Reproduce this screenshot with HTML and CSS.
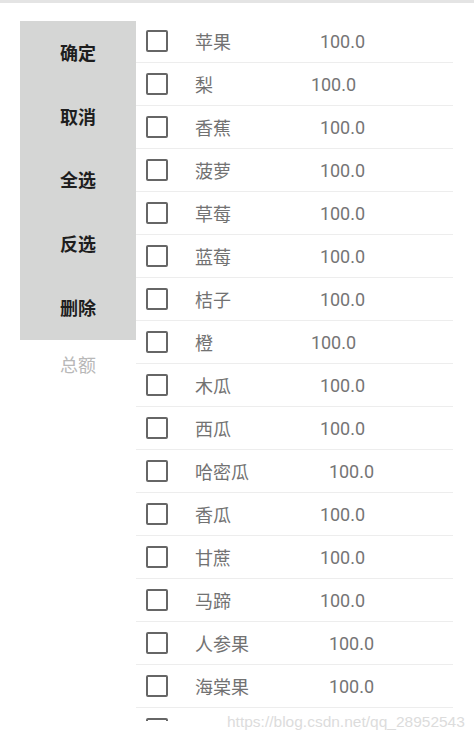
FILE: index.html
```html
<!DOCTYPE html>
<html lang="zh">
<head>
<meta charset="utf-8">
<link rel="stylesheet" href="styles.css">
</head>
<body>
<div class="topbar"></div>
<div class="main">
  <div class="side">
    <div class="panel">
      <div class="btn">确定</div>
      <div class="btn">取消</div>
      <div class="btn">全选</div>
      <div class="btn">反选</div>
      <div class="btn">删除</div>
    </div>
    <div class="total">总额</div>
  </div>
  <div class="list">
    <div class="row"><span class="cb"></span><span class="name">苹果</span><span class="num"><span>100.0</span></span></div>
    <div class="row"><span class="cb"></span><span class="name">梨</span><span class="num"><span>100.0</span></span></div>
    <div class="row"><span class="cb"></span><span class="name">香蕉</span><span class="num"><span>100.0</span></span></div>
    <div class="row"><span class="cb"></span><span class="name">菠萝</span><span class="num"><span>100.0</span></span></div>
    <div class="row"><span class="cb"></span><span class="name">草莓</span><span class="num"><span>100.0</span></span></div>
    <div class="row"><span class="cb"></span><span class="name">蓝莓</span><span class="num"><span>100.0</span></span></div>
    <div class="row"><span class="cb"></span><span class="name">桔子</span><span class="num"><span>100.0</span></span></div>
    <div class="row"><span class="cb"></span><span class="name">橙</span><span class="num"><span>100.0</span></span></div>
    <div class="row"><span class="cb"></span><span class="name">木瓜</span><span class="num"><span>100.0</span></span></div>
    <div class="row"><span class="cb"></span><span class="name">西瓜</span><span class="num"><span>100.0</span></span></div>
    <div class="row"><span class="cb"></span><span class="name">哈密瓜</span><span class="num"><span>100.0</span></span></div>
    <div class="row"><span class="cb"></span><span class="name">香瓜</span><span class="num"><span>100.0</span></span></div>
    <div class="row"><span class="cb"></span><span class="name">甘蔗</span><span class="num"><span>100.0</span></span></div>
    <div class="row"><span class="cb"></span><span class="name">马蹄</span><span class="num"><span>100.0</span></span></div>
    <div class="row"><span class="cb"></span><span class="name">人参果</span><span class="num"><span>100.0</span></span></div>
    <div class="row"><span class="cb"></span><span class="name">海棠果</span><span class="num"><span>100.0</span></span></div>
    <div class="row"><span class="cb"></span></div>
  </div>
</div>
<div class="watermark">https://blog.csdn.net/qq_28952543</div>
</body>
</html>
```
FILE: styles.css
```css
html, body {
  margin: 0;
  padding: 0;
  background: #ffffff;
  width: 474px;
  height: 741px;
  overflow: hidden;
  font-family: Roboto, "Noto Sans CJK SC", sans-serif;
}
.topbar {
  height: 3px;
  background: #e4e4e4;
}
.main {
  display: flex;
  padding: 0 20px;
}
.side {
  width: 116px;
  margin-top: 18px;
  display: flex;
  flex-direction: column;
}
.panel {
  background: #d5d6d5;
  height: 319px;
  display: flex;
  flex-direction: column;
}
.btn {
  flex: 1;
  display: flex;
  align-items: center;
  justify-content: center;
  font-size: 18px;
  font-weight: bold;
  color: #1e1e1e;
  padding-bottom: 2px;
}
.total {
  height: 48px;
  display: flex;
  align-items: center;
  justify-content: center;
  font-size: 18px;
  color: #b8b8b8;
}
.list {
  width: 318px;
  margin-top: 17px;
  height: 701px;
  overflow: hidden;
}
.row {
  height: 42px;
  border-bottom: 1px solid #ededed;
  display: flex;
  align-items: center;
  margin-right: 1px;
}
.cb {
  width: 18px;
  height: 18px;
  border: 2.5px solid #666666;
  border-radius: 2px;
  margin-left: 10px;
  margin-top: -1px;
  flex: none;
}
.name {
  margin-left: 27px;
  font-size: 18px;
  color: #727272;
  white-space: nowrap;
}
.num {
  flex: 1;
  display: flex;
  justify-content: center;
  font-size: 18px;
  color: #757575;
  margin-right: -1px;
}
.watermark {
  position: absolute;
  left: 227px;
  top: 713px;
  font-family: "Liberation Sans", sans-serif;
  font-size: 15.5px;
  color: #dcdcdc;
  white-space: nowrap;
}
```
